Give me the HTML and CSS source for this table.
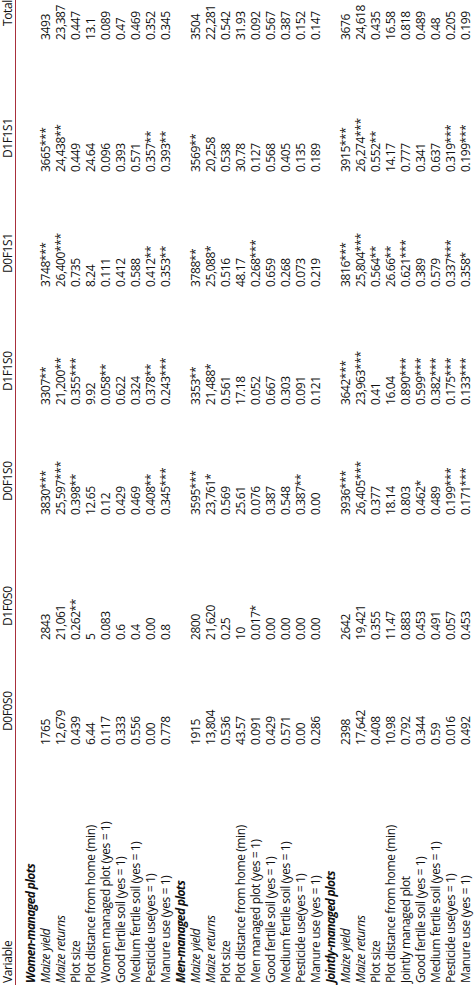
FILE: index.html
```html
<!DOCTYPE html>
<html lang="en">
<head>
<meta charset="utf-8">
<title>Plot characteristics by treatment</title>
<link rel="stylesheet" href="styles.css">
</head>
<body>
<div class="page">
  <div class="sheet">
    <div class="row head">
      <div class="lab">Variable</div>
      <div class="hc">D0F0S0</div>
      <div class="hc">D1F0S0</div>
      <div class="hc">D0F1S0</div>
      <div class="hc">D1F1S0</div>
      <div class="hc">D0F1S1</div>
      <div class="hc">D1F1S1</div>
      <div class="hc">Total</div>
    </div>
    <div class="body">
      <div class="row sec"><div class="lab">Women-managed plots</div></div>
      <div class="row"><div class="lab it">Maize yield</div><div>1765</div><div>2843</div><div>3830***</div><div>3307**</div><div>3748***</div><div>3665***</div><div>3493</div></div>
      <div class="row"><div class="lab it">Maize returns</div><div>12,679</div><div>21,061</div><div>25,597***</div><div>21,200**</div><div>26,400***</div><div>24,438**</div><div>23,387</div></div>
      <div class="row"><div class="lab">Plot size</div><div>0.439</div><div>0.262**</div><div>0.398**</div><div>0.355***</div><div>0.735</div><div>0.449</div><div>0.447</div></div>
      <div class="row"><div class="lab">Plot distance from home (min)</div><div>6.44</div><div>5</div><div>12.65</div><div>9.92</div><div>8.24</div><div>24.64</div><div>13.1</div></div>
      <div class="row"><div class="lab">Women managed plot (yes = 1)</div><div>0.117</div><div>0.083</div><div>0.12</div><div>0.058**</div><div>0.111</div><div>0.096</div><div>0.089</div></div>
      <div class="row"><div class="lab">Good fertile soil (yes = 1)</div><div>0.333</div><div>0.6</div><div>0.429</div><div>0.622</div><div>0.412</div><div>0.393</div><div>0.47</div></div>
      <div class="row"><div class="lab">Medium fertile soil (yes = 1)</div><div>0.556</div><div>0.4</div><div>0.469</div><div>0.324</div><div>0.588</div><div>0.571</div><div>0.469</div></div>
      <div class="row"><div class="lab">Pesticide use(yes = 1)</div><div>0.00</div><div>0.00</div><div>0.408**</div><div>0.378**</div><div>0.412**</div><div>0.357**</div><div>0.352</div></div>
      <div class="row"><div class="lab">Manure use (yes = 1)</div><div>0.778</div><div>0.8</div><div>0.345***</div><div>0.243***</div><div>0.353**</div><div>0.393**</div><div>0.345</div></div>

      <div class="row sec"><div class="lab">Men-managed plots</div></div>
      <div class="row"><div class="lab it">Maize yield</div><div>1915</div><div>2800</div><div>3595***</div><div>3353**</div><div>3788**</div><div>3569**</div><div>3504</div></div>
      <div class="row"><div class="lab it">Maize returns</div><div>13,804</div><div>21,620</div><div>23,761*</div><div>21,488*</div><div>25,088*</div><div>20,258</div><div>22,281</div></div>
      <div class="row"><div class="lab">Plot size</div><div>0.536</div><div>0.25</div><div>0.569</div><div>0.561</div><div>0.516</div><div>0.538</div><div>0.542</div></div>
      <div class="row"><div class="lab">Plot distance from home (min)</div><div>43.57</div><div>10</div><div>25.61</div><div>17.18</div><div>48.17</div><div>30.78</div><div>31.93</div></div>
      <div class="row"><div class="lab">Men managed plot (yes = 1)</div><div>0.091</div><div>0.017*</div><div>0.076</div><div>0.052</div><div>0.268***</div><div>0.127</div><div>0.092</div></div>
      <div class="row"><div class="lab">Good fertile soil (yes = 1)</div><div>0.429</div><div>0.00</div><div>0.387</div><div>0.667</div><div>0.659</div><div>0.568</div><div>0.567</div></div>
      <div class="row"><div class="lab">Medium fertile soil (yes = 1)</div><div>0.571</div><div>0.00</div><div>0.548</div><div>0.303</div><div>0.268</div><div>0.405</div><div>0.387</div></div>
      <div class="row"><div class="lab">Pesticide use(yes = 1)</div><div>0.00</div><div>0.00</div><div>0.387**</div><div>0.091</div><div>0.073</div><div>0.135</div><div>0.152</div></div>
      <div class="row"><div class="lab">Manure use (yes = 1)</div><div>0.286</div><div>0.00</div><div>0.00</div><div>0.121</div><div>0.219</div><div>0.189</div><div>0.147</div></div>

      <div class="row sec"><div class="lab">Jointly-managed plots</div></div>
      <div class="row"><div class="lab it">Maize yield</div><div>2398</div><div>2642</div><div>3936***</div><div>3642***</div><div>3816***</div><div>3915***</div><div>3676</div></div>
      <div class="row"><div class="lab it">Maize returns</div><div>17,642</div><div>19,421</div><div>26,405***</div><div>23,963***</div><div>25,804***</div><div>26,274***</div><div>24,618</div></div>
      <div class="row"><div class="lab">Plot size</div><div>0.408</div><div>0.355</div><div>0.377</div><div>0.41</div><div>0.564**</div><div>0.552**</div><div>0.435</div></div>
      <div class="row"><div class="lab">Plot distance from home (min)</div><div>10.98</div><div>11.47</div><div>18.14</div><div>16.04</div><div>26.66**</div><div>14.17</div><div>16.58</div></div>
      <div class="row"><div class="lab">Jointly managed plot</div><div>0.792</div><div>0.883</div><div>0.803</div><div>0.890***</div><div>0.621***</div><div>0.777</div><div>0.818</div></div>
      <div class="row"><div class="lab">Good fertile soil (yes = 1)</div><div>0.344</div><div>0.453</div><div>0.462*</div><div>0.599***</div><div>0.389</div><div>0.341</div><div>0.489</div></div>
      <div class="row"><div class="lab">Medium fertile soil (yes = 1)</div><div>0.59</div><div>0.491</div><div>0.489</div><div>0.382***</div><div>0.579</div><div>0.637</div><div>0.48</div></div>
      <div class="row"><div class="lab">Pesticide use(yes = 1)</div><div>0.016</div><div>0.057</div><div>0.199***</div><div>0.175***</div><div>0.337***</div><div>0.319***</div><div>0.205</div></div>
      <div class="row"><div class="lab">Manure use (yes = 1)</div><div>0.492</div><div>0.453</div><div>0.171***</div><div>0.133***</div><div>0.358*</div><div>0.199***</div><div>0.199</div></div>
    </div>
  </div>
</div>
</body>
</html>
```

FILE: styles.css
```css
html, body {
  margin: 0;
  padding: 0;
  background: #ffffff;
}

.page {
  width: 474px;
  height: 985px;
  overflow: hidden;
}

.sheet {
  width: 985px;
  height: 474px;
  transform-origin: 0 0;
  transform: translateY(985px) rotate(-90deg);
  font-family: "Open Sans", "Liberation Sans", Arial, sans-serif;
  font-size: 12px;
  letter-spacing: -0.4px;
  color: #111111;
  background: #ffffff;
}

.row {
  display: grid;
  grid-template-columns: 240px 105px 125px 110px 118px 115px 132px 40px;
  height: 15px;
  line-height: 15px;
  white-space: nowrap;
}

.lab {
  padding-left: 2px;
}

.head {
  height: 16px;
  line-height: 14px;
  padding-top: 1px;
  box-sizing: border-box;
  border-bottom: 1px solid #a8303c;
}

.head .hc {
  padding-left: 14px;
}

.body {
  padding-top: 7px;
}

.it {
  font-style: italic;
}

.sec .lab {
  font-style: italic;
  font-weight: bold;
  letter-spacing: -0.6px;
}
```
